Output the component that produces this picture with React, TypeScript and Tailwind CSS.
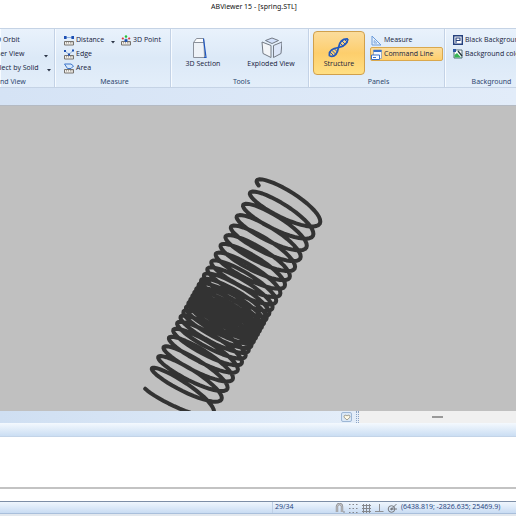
import { ReactNode } from 'react';

// axial offset of every left-hand turn of the coil
const TURNS = [
  0, 14, 28, 41, 53, 64, 74, 84, 93, 101, 108, 114, 119, 124, 128, 132, 136,
  140, 145, 150, 156, 163, 171, 180, 191, 202, 215, 234,
];

const RADIUS = 38;

const coilPath = () => {
  const steps = 40;
  const points: string[] = [];
  for (let i = -3; i <= (TURNS.length - 1) * steps - 3; i++) {
    const n = Math.min(Math.max(Math.floor(i / steps), 0), TURNS.length - 2);
    const f = i / steps - n;
    const s = TURNS[n] + (TURNS[n + 1] - TURNS[n]) * f;
    const angle = f * 2 * Math.PI;
    const depth = 10 - s / 120;
    const along = -RADIUS * Math.cos(angle);
    const across = s - depth * Math.sin(angle);
    const x = 290 + along * 0.873 - across * 0.488;
    const y = 199 + along * 0.488 + across * 0.873;
    points.push(`${x.toFixed(1)} ${y.toFixed(1)}`);
  }
  return 'M' + points.join('L');
};

const Ruler = () => (
  <>
    <path d="M.5 6.500h9v3.500h-9z" fill="#f3f0ea" stroke="#77736e" />
    <path d="M2.500 7v1.500M4.500 7v1.500M6.500 7v1.500M8 7v1.500" stroke="#77736e" strokeWidth=".6" />
  </>
);

const DistanceIcon = () => (
  <svg viewBox="0 0 10 11" className="h-[11px] w-[10px] shrink-0">
    <path d="M1 2.500h8" stroke="#93b4e0" />
    <path d="M0 1h2.600v3H0zM7.400 1H10v3H7.400z" fill="#1c4fb4" />
    <Ruler />
  </svg>
);

const EdgeIcon = () => (
  <svg viewBox="0 0 10 11" className="h-[11px] w-[10px] shrink-0">
    <path d="M1 2l4 3.500L9 1.500" fill="none" stroke="#7a9ac8" strokeWidth=".8" />
    <Ruler />
    <path d="M0 1h2v2H0zM4 4.500h2v2H4zM8 .5h2v2H8z" fill="#1c4fb4" />
  </svg>
);

const AreaIcon = () => (
  <svg viewBox="0 0 10 11" className="h-[11px] w-[10px] shrink-0">
    <Ruler />
    <path d="M.5 1h6.500l2.500 2L7 5.500H3.500z" fill="#d5e7fb" stroke="#3d74c9" />
  </svg>
);

const PointIcon = () => (
  <svg viewBox="0 0 10 11" className="h-[11px] w-[10px] shrink-0">
    <Ruler />
    <path d="M5 6V1.500M5 5.500L1.500 3M5 5.500L8.500 3" stroke="#8aa" strokeWidth=".6" />
    <circle cx="5" cy="1.500" r="1.200" fill="#22c534" />
    <circle cx="1.800" cy="3.500" r="1.100" fill="#e0353c" />
    <circle cx="8.200" cy="3.500" r="1.100" fill="#e0353c" />
    <circle cx="5" cy="5.500" r="1.500" fill="#1c4fb4" />
  </svg>
);

const SectionIcon = () => (
  <svg viewBox="0 0 22 22" className="h-[22px] w-[22px]">
    <path d="M1.500 5.500h10.500l.5 15h-11z" fill="#eef2f7" stroke="#8b919b" strokeLinejoin="round" />
    <path d="M1.500 5.500L4.500 1.500h7L12 5.500z" fill="#fbfcfd" stroke="#8b919b" strokeLinejoin="round" />
    <path d="M11.500 1.500L14 20.500h-2" fill="none" stroke="#1e56c0" strokeWidth="1.200" />
  </svg>
);

const ExplodedIcon = () => (
  <svg viewBox="0 0 22 22" className="h-[22px] w-[22px]">
    <g fill="#f3f5f8" stroke="#737a85" strokeLinejoin="round">
      <path d="M12 1l6.500 2.500L12 6.500 5.500 3.500z" fill="#d3e1fb" />
      <path d="M2 5l9 3.500v12L3 16.500z" />
      <path d="M22 5l-8.500 3.500v12l7.500-4z" fill="#dce6f8" />
    </g>
  </svg>
);

const DnaIcon = () => (
  <svg viewBox="0 0 22 22" className="h-[22px] w-[22px]" fill="none" stroke="#2359bd">
    <path d="M1.500 19C.5 13 5 11.500 10.500 10.500S19 7 20 2" strokeWidth="1.700" />
    <path d="M1.500 19c6 1.500 8-3 9-8.500S14 1.500 20 2" strokeWidth="1.700" />
    <path d="M2 15l4 4M3.500 13l4.500 4.500M6 11.500l3.500 3.500M12 6l3.500 3.500M13.500 3.500l4.500 4.500M16.500 2.500l3 3" strokeWidth="1" />
  </svg>
);

const TriangleIcon = () => (
  <svg viewBox="0 0 11 11" className="h-[11px] w-[11px] shrink-0">
    <path d="M1 1v9h9z" fill="#e3effc" stroke="#6c9bd9" />
    <path d="M3.200 5.500v2.500h2.600z" fill="#fff" stroke="#6c9bd9" strokeWidth=".8" />
  </svg>
);

const CommandIcon = () => (
  <svg viewBox="0 0 11 11" className="h-[11px] w-[11px] shrink-0">
    <path d="M2.500 1h8v8.500h-8z" fill="#f5f8fc" stroke="#8b9db8" strokeWidth=".8" />
    <path d="M2.500 1h8v2h-8z" fill="#3970c6" />
    <path d="M.5 6h8v4.500h-8z" fill="#fff" stroke="#3970c6" />
    <path d="M2 8.500h3" stroke="#3970c6" />
  </svg>
);

const BlackIcon = () => (
  <svg viewBox="0 0 10 10" className="h-[10px] w-[10px] shrink-0">
    <path d="M.7.7h8.600v8.600H.7z" fill="#fff" stroke="#25417e" strokeWidth="1.400" />
    <path d="M3 8V3h4v2.500H3" fill="none" stroke="#25417e" strokeWidth="1.100" />
  </svg>
);

const ColorIcon = () => (
  <svg viewBox="0 0 10 10" className="h-[10px] w-[10px] shrink-0">
    <path d="M1 1h8v8H1z" fill="#fff" stroke="#3f5b66" strokeWidth=".9" />
    <path d="M1.500 8.500V6L4 4l4 4.500z" fill="#35b554" />
    <path d="M0 0h3v3H0z" fill="#2d5aa8" />
    <path d="M5 2l4 5" stroke="#23343b" strokeWidth="1.300" />
  </svg>
);

const Arrow = () => (
  <svg viewBox="0 0 4 3" className="mt-1 h-[3px] w-1 shrink-0">
    <path d="M0 0h4L2 2.500z" fill="#2b3446" />
  </svg>
);

const Group = ({
  title,
  className,
  titleClass = 'pl-1 text-center',
  children,
}: {
  title: string;
  className: string;
  titleClass?: string;
  children: ReactNode;
}) => (
  <section className={`flex shrink-0 flex-col overflow-hidden border-r border-[#c3d2e6] shadow-[inset_1px_0_0_#f7fbff] ${className}`}>
    <div className="flex h-12 pt-[2px]">{children}</div>
    <h2 className={`whitespace-nowrap font-['Noto_Sans',sans-serif] text-[7px] leading-[10px] text-[#2f486f] ${titleClass}`}>{title}</h2>
  </section>
);

const Tool = ({ icon, label, arrow, className = '' }: { icon?: ReactNode; label: string; arrow?: boolean; className?: string }) => (
  <button className={`flex h-[14px] items-center gap-[2px] whitespace-nowrap text-left ${className}`}>
    {icon}
    <span className="grow">{label}</span>
    {arrow && <Arrow />}
  </button>
);

const BigTool = ({ icon, label, className = '' }: { icon: ReactNode; label: string; className?: string }) => (
  <button className={`flex flex-col items-center justify-start whitespace-nowrap ${className}`}>
    {icon}
    <span className="leading-[10px]">{label}</span>
  </button>
);

const Ribbon = () => (
  <nav className="flex h-[60px] overflow-hidden border-y border-[#c5d3e5] bg-linear-to-b from-[#e9f2fc] via-[#dce9f7] to-[#e3eefa]">
    <Group title="and View" className="w-[55px]" titleClass="-ml-1">
      <div className="-ml-2 flex flex-col pt-[2px]">
        <Tool label="3D Orbit" />
        <Tool label="User View" arrow className="w-14" />
        <Tool label="Select by Solid" arrow className="w-[59px]" />
      </div>
    </Group>
    <Group title="Measure" className="w-[116px]">
      <div className="ml-[9px] flex flex-col pt-[2px]">
        <Tool icon={<DistanceIcon />} label="Distance" arrow className="w-[51px]" />
        <Tool icon={<EdgeIcon />} label="Edge" />
        <Tool icon={<AreaIcon />} label="Area" />
      </div>
      <div className="ml-[6px] pt-[2px]">
        <Tool icon={<PointIcon />} label="3D Point" />
      </div>
    </Group>
    <Group title="Tools" className="w-[138px]">
      <BigTool icon={<SectionIcon />} label="3D Section" className="ml-2 w-12 pt-[6px]" />
      <BigTool icon={<ExplodedIcon />} label="Exploded View" className="ml-4 w-14 pt-[6px]" />
    </Group>
    <Group title="Panels" className="w-[136px]">
      <BigTool
        icon={<DnaIcon />}
        label="Structure"
        className="ml-1 h-[44px] w-[52px] shrink-0 rounded-sm border border-[#d0a04c] bg-linear-to-b from-[#fbdc9b] via-[#fdce6c] to-[#ffdf83] pt-[5px]"
      />
      <div className="ml-[5px] flex w-[73px] flex-col pt-[2px]">
        <Tool icon={<TriangleIcon />} label="Measure" className="pl-px" />
        <Tool
          icon={<CommandIcon />}
          label="Command Line"
          className="rounded-xs border border-[#d9a84e] bg-linear-to-b from-[#fbdc9b] to-[#ffcf6b]"
        />
      </div>
    </Group>
    <Group title="Background" className="min-w-[94px] grow" titleClass="text-center">
      <div className="ml-2 flex flex-col pt-[2px]">
        <Tool icon={<BlackIcon />} label="Black Background" />
        <Tool icon={<ColorIcon />} label="Background color" />
      </div>
    </Group>
  </nav>
);

const SnapIcons = () => (
  <div className="flex items-center gap-[3px]">
    <button aria-label="Snap">
      <svg viewBox="0 0 10 10" className="size-[10px]" fill="none" stroke="#8b8c90">
        <path d="M2 9V3.500a2.500 2.500 0 015 0V9" strokeWidth="2.400" />
        <path d="M2 9V3.500a2.500 2.500 0 015 0V9" stroke="#e4e5e8" strokeWidth=".7" />
        <path d="M8 9h2" />
      </svg>
    </button>
    <button aria-label="Dots">
      <svg viewBox="0 0 10 10" className="size-[10px]">
        <path d="M1 1.500h9M1 5.500h9M1 9.500h9" stroke="#85878c" strokeDasharray="1.500 2" />
      </svg>
    </button>
    <button aria-label="Grid">
      <svg viewBox="0 0 10 10" className="size-[10px]">
        <path d="M1 2.500h9M1 5.500h9M1 8.500h9M2.500 1v9M5.500 1v9M8.500 1v9" stroke="#85878c" />
      </svg>
    </button>
    <button aria-label="Ortho">
      <svg viewBox="0 0 10 10" className="size-[10px]">
        <path d="M1 8.500h8.500M5.500 1v7.500" stroke="#8e9094" />
      </svg>
    </button>
    <button aria-label="Polar">
      <svg viewBox="0 0 10 10" className="size-[10px]" fill="none" stroke="#77797e">
        <circle cx="4.500" cy="6" r="3.300" />
        <path d="M4 6.500L9.500 1M4 6h6" />
        <circle cx="4.500" cy="6" r=".8" fill="#77797e" />
      </svg>
    </button>
  </div>
);

const App = () => (
  <div className="flex min-h-screen flex-col overflow-hidden bg-white font-['Open_Sans',sans-serif] text-[7px] text-[#14203a]">
    <header className="flex h-7 justify-center">
      <h1 className="pr-2 font-['Noto_Sans',sans-serif] text-[7px] leading-[14px] text-[#111]">ABViewer 15 - [spring.STL]</h1>
    </header>
    <Ribbon />
    <div className="h-[18px] border-b border-[#b4bac3] bg-linear-to-r from-[#d5e3f5] to-[#e2ecf9]" />

    <main className="relative grow basis-0 bg-[#c0c0c0]">
      <svg viewBox="0 106 516 305" preserveAspectRatio="xMidYMax slice" className="absolute inset-0 h-full w-full">
        <path d={coilPath()} fill="none" stroke="#333" strokeWidth="4" strokeLinecap="round" strokeLinejoin="round" />
      </svg>
    </main>

    <div className="flex h-3 bg-linear-to-r from-[#cfdff2] to-[#edf4fc]">
      <div className="flex grow justify-end">
        <button aria-label="Favorites" className="my-px flex w-[11px] items-center justify-center rounded-xs border border-[#9db7d6] bg-[#dbe8f6]">
          <svg viewBox="0 0 8 7" className="h-[7px] w-2">
            <path d="M4 6L1 3.200C.5 1 3 .5 4 2c1-1.500 3.500-1 3 1.200z" fill="#fffbe8" stroke="#8f8c7e" strokeWidth=".8" />
          </svg>
        </button>
      </div>
      <div className="ml-1 w-[3px] border-x border-dotted border-[#8ba3c4]" />
      <div className="flex w-[157px] items-center bg-[#f0f0f0] pl-[73px]">
        <div className="h-[2px] w-[11px] bg-[#999]" />
      </div>
    </div>
    <div className="h-[14px] border-b border-[#c3d4e8] bg-linear-to-b from-[#f4f9fe] to-[#cbdef3]" />

    <div className="h-[50px] bg-white" />
    <input aria-label="Command" className="h-[14px] w-full border-t-2 border-[#c3c3c3] bg-white px-1 outline-none" />

    <footer className="border-b-2 border-[#e3e8ee]">
      <div className="flex h-[13px] items-center border-y border-t-[#7d8ea6] border-b-[#a9bfdb] bg-linear-to-b from-[#eff6fd] to-[#c9dcf3] text-[#23407a]">
        <div className="grow" />
        <div className="w-[63px] border-l border-[#bfd0e6] pl-[2px]">29/34</div>
        <SnapIcons />
        <div className="w-[119px] whitespace-nowrap pl-1">(6438.819; -2826.635; 25469.9)</div>
      </div>
    </footer>
  </div>
);

export default App;
